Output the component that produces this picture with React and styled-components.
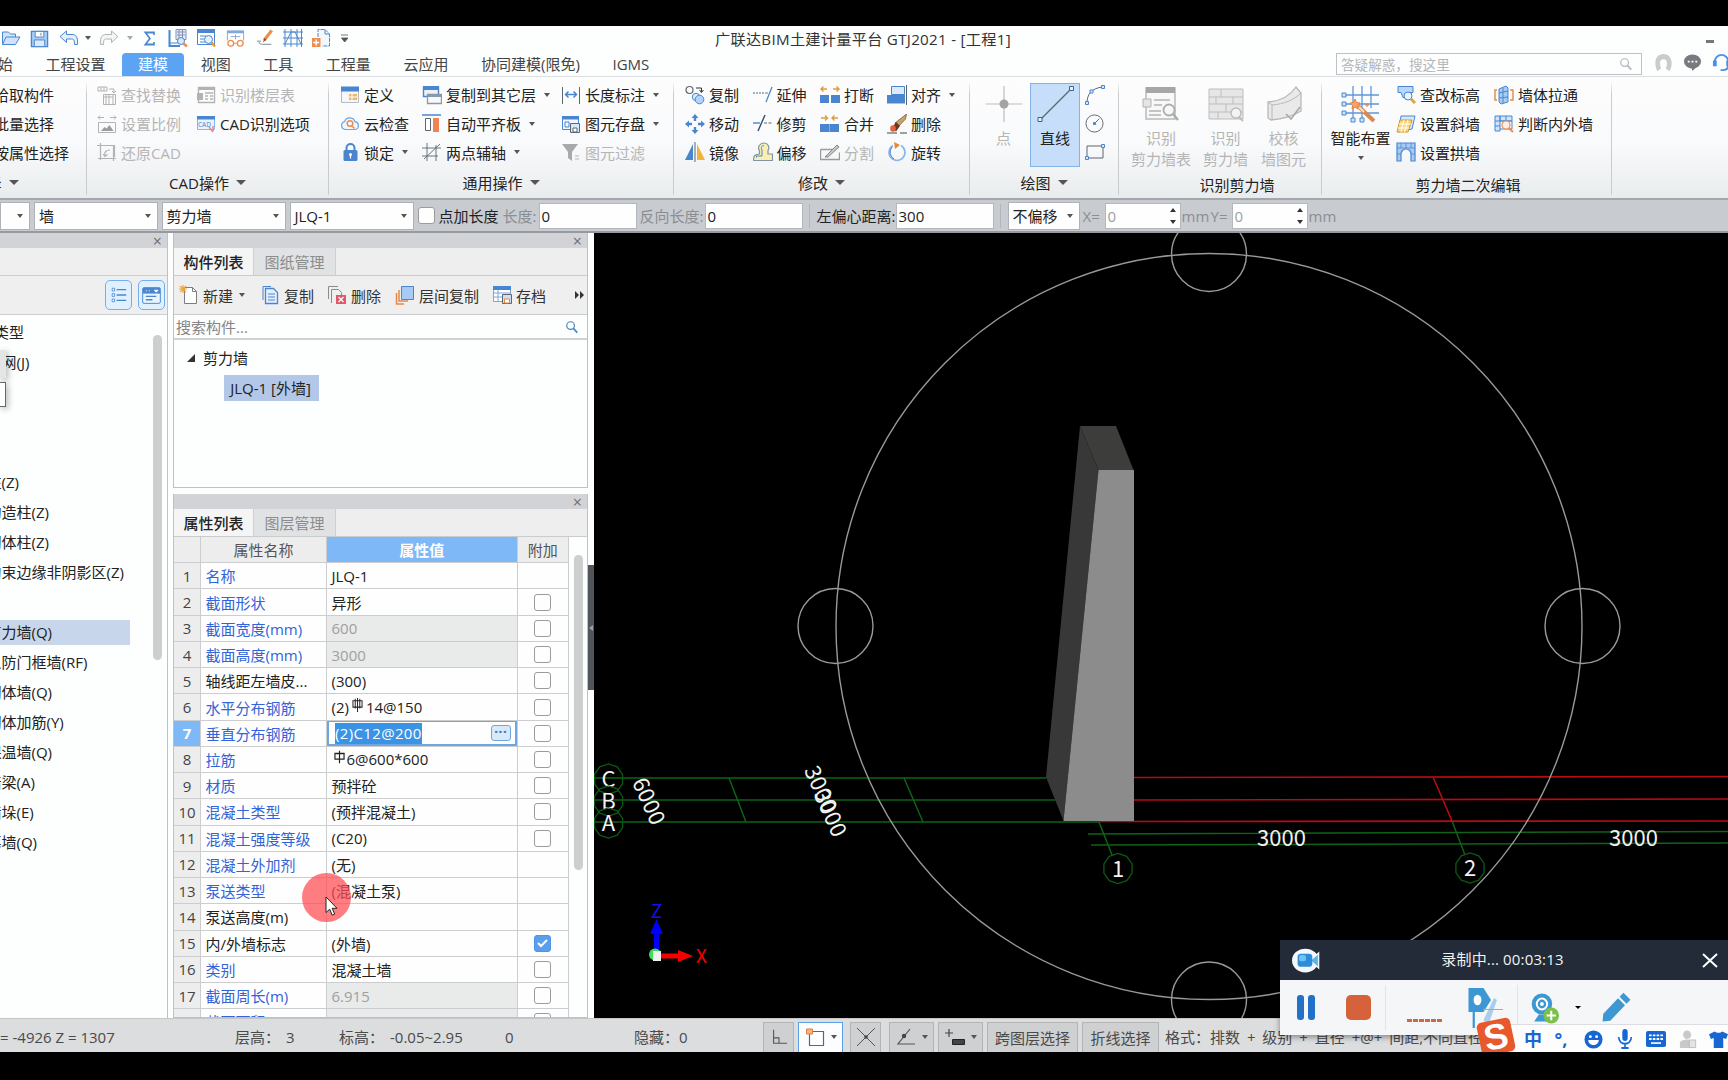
import { useState } from 'react'
import styled, { createGlobalStyle } from 'styled-components'

const GlobalStyle = createGlobalStyle`
    *{
        box-sizing: border-box;
    }
    body{
        margin: 0;
        background: #000;
        overflow: hidden;
        font-family: "Open Sans", "Noto Sans CJK SC", sans-serif;
        font-size: 15px;
        color: #222;
    }
`;

const B = '#4a86cf'
const O = '#ee8d4e'
const G = '#b3b3b3'
const D = '#5c6670'

/* ---------- icons, drawn on a 20x20 grid ---------- */
const icons = {
    folder: <><path d="M1.500 16V4h6l2 2h5v3" fill="#cfe3fa" stroke={B}/><path d="M1.500 16.500 5 9h14l-4.500 7.500z" fill="#cfe3fa" stroke={B}/></>,
    save: <><path d="M1.500 2.500h17v16h-17z" fill="#a9cdf5" stroke={B} strokeWidth="1.400"/><path d="M5.500 2.500h9v6h-9z" fill="#fff" stroke={B}/><path d="M4.500 11.500h11v7h-11z" fill="#dcebfc" stroke={B}/><path d="M11.500 4v3" stroke={B}/></>,
    undo: <path d="M1 8.500 7.500 3v3.500H13c4 0 6 2.500 5.500 10h-3c0-4-.5-5.500-3-5.500h-5V14.500z" fill="#e4effc" stroke={B}/>,
    redo: <path d="M19 8.500 12.500 3v3.500H7c-4 0-6 2.500-5.500 10h3c0-4 .5-5.500 3-5.500h5V14.500z" fill="#f4f4f4" stroke={G}/>,
    sigma: <path d="M16 6V3H4.500l6 7-6 7H16v-3" fill="none" stroke={B} strokeWidth="2.200"/>,
    calc: <><path d="M1.500 2v16H12" fill="none" stroke={B} strokeWidth="2"/><path d="M1 15h10" stroke={B}/><path d="M8 1.500h10v10H8z" fill="#e6eefa" stroke="#8191b5"/><path d="M9 4h8M9 7h8M11 2v9M14.500 2v9" stroke="#8191b5"/><circle cx="13" cy="13" r="3.500" fill="#dbe8f8" stroke={B}/><path d="m15.500 15.500 3.500 3" stroke={O} strokeWidth="2.500"/></>,
    report: <><path d="M1.500 1.500h17v15h-17z" fill="#fff" stroke={B}/><path d="M1 1h18v4H1z" fill={B}/><path d="M4 8h6M4 11h4M4 14h5" stroke={B}/><circle cx="12.500" cy="11.500" r="4" fill="#e6f0fc" stroke={B}/><path d="m15.500 14.500 3.500 4" stroke="#e29a3a" strokeWidth="2.500"/></>,
    glasses: <><path d="M1.500 12V2.500h17V12" fill="#fff" stroke="#8aa9d6"/><path d="M1 1.500h18v3H1z" fill="#7fa9dd"/><path d="M5 8h10M10 6v5" stroke="#8aa9d6"/><circle cx="5" cy="15" r="3" fill="none" stroke={O} strokeWidth="1.400"/><circle cx="15" cy="15" r="3" fill="none" stroke={O} strokeWidth="1.400"/><path d="M8 15h4" stroke={O}/></>,
    brush: <><path d="M17.500 1.500 9 12.500" stroke={O} strokeWidth="3.500"/><path d="m9.500 10-2 5 4-3z" fill="#8a4a22"/><path d="M1 13.500h4c-3 2-1 3.500 3 3.500h9" fill="none" stroke="#77828f"/></>,
    mesh: <path d="M2 1v18M8 1v18M14 1v18M18.500 1v18M0 4h20M0 10h20M0 16h20M2 16 8 4h4l6 12" fill="none" stroke={B}/>,
    addpage: <><path d="M7 9V1.500h7l4.500 4.500v12H11" fill="#f3f8fe" stroke={B} strokeDasharray="4 1"/><path d="M14 1.500V6h4.500" fill="none" stroke={B}/><path d="M1 10h8.500v9H1z" fill={O}/><path d="M5.200 11.500v6M2.200 14.500h6" stroke="#fff" strokeWidth="1.400"/></>,
    find: <><path d="M1 2h9v4H1zM4 2v4M7 2v4" fill="none" stroke={G}/><path d="M12 4h5v3M15 6l2 2 2-2" fill="none" stroke={G}/><path d="M6.500 9.500h12v10h-12zM6 12h10M9 9v10M12 9v10M16 9v10" fill="none" stroke={G}/></>,
    scale: <><path d="M1 3.500h6M3 1.500l-2 2 2 2M13 3.500h6M17 1.500l2 2-2 2" fill="none" stroke={G}/><path d="M1.500 8.500h17v10h-17z" fill="none" stroke={G}/><path d="m4 17 3.500-4 2 1.500 3-3.500 4 6z" fill="#9c9c9c"/></>,
    restore: <path d="M3.500 1v17M0 3.500h17.500V15M1 16.500h18M16.500 3v16M8 14c-1-4 1-6 5-6M6 12l2 2.500 2.500-2" fill="none" stroke={G} strokeWidth="1.200"/>,
    floors: <><path d="M2.500 2.500h16v15h-16z" fill="none" stroke={G} strokeWidth="1.400"/><path d="M2 2h17v3H2zM1 8h6v7H1z" fill={G}/><path d="M9 8h8M9 11h3M9 14h3M14 11h3M14 14h3" stroke={G} strokeWidth="1.400"/></>,
    cadopt: <><path d="M1.500 3.500h17v12h-17z" fill="#e9f2fd" stroke="#8ab5ea"/><path d="M1 2h18v3.500H1z" fill={B}/><text x="2" y="13" fontSize="6.500" fill={B}>CAD</text><path d="m13 13 4 5M17 12v5" stroke="#e58a8a" strokeWidth="1.500"/></>,
    define: <><path d="M1.500 2.500h17v15h-17z" fill="#f4f6f9" stroke="#b3bccb"/><path d="M1 1.500h18v5H1z" fill={B}/><path d="M9 9h8v6H9z" fill="#f3b563"/><path d="M3 11h4M3 14h4M9 12h8M12 9v6" stroke="#fff"/></>,
    cloud: <><path d="M5 15.500a4 4 0 0 1-.5-7.800 5.500 5.500 0 0 1 10.500 0 4 4 0 0 1 .5 7.800z" fill="#f0f7ff" stroke="#6ea5e4" strokeWidth="1.200"/><circle cx="10" cy="9.500" r="2.800" fill="none" stroke={O} strokeWidth="1.500"/><path d="m12 12 2.500 2.500" stroke={O} strokeWidth="1.500"/></>,
    lock: <><path d="M6.500 9V6a4 4 0 0 1 8 0v3" fill="none" stroke={B} strokeWidth="2"/><rect x="3.500" y="8" width="14" height="11" rx="1.500" fill={B}/><circle cx="10.500" cy="12.500" r="1.500" fill="#fff"/><path d="M10.500 13v3.500" stroke="#fff" strokeWidth="1.200"/></>,
    copyfloor: <><path d="M1.500 2.500h15v9h-15z" fill="#eaf2fc" stroke={B} strokeWidth="1.400"/><path d="M1 1h16v4H1z" fill={B}/><path d="M5.500 9.500h14v9h-14z" fill="#f7f8f9" stroke="#8b98a5" strokeWidth="1.300"/><path d="M5 9h15v3H5z" fill="#8b98a5"/></>,
    slab: <><path d="M0 1h19" stroke={B} strokeWidth="1.500"/><path d="M3.500 4.500h5v12h-5z" fill="#fff" stroke={D}/><path d="M11 4h6v14h-6z" fill="#ef8355"/></>,
    axis: <path d="M0 6h19M0 14h16M5 1v18M14 3v16M2 17 18 2" fill="none" stroke={D} strokeWidth=".9"/>,
    dim: <><path d="M1.500 2v17M18.500 2v17" stroke={D}/><path d="M5 9.500h10M7.500 6.500l-3 3 3 3M12.500 6.500l3 3-3 3" fill="none" stroke={B} strokeWidth="1.500"/></>,
    saveimg: <><path d="M1.500 2.500h16v13h-16z" fill="#f3f8fe" stroke={B}/><path d="M1 2h17v3.500H1z" fill={B}/><path d="M4 8h4v5H4z" fill="none" stroke={B}/><path d="M9.500 9.500h9v9h-9z" fill="#d8e8fb" stroke={D}/><path d="M12 14h4v4h-4z" fill="#fff" stroke={D}/></>,
    filter: <><path d="M1 2h16l-6 8v9l-4-3v-6z" fill="#a9a9a9"/><path d="M14 14h4M14 17h4" stroke={G}/></>,
    copy: <><circle cx="4.500" cy="5" r="3.500" fill="none" stroke={D} strokeWidth="1.200"/><path d="M11 3h5.500v4M14.500 5l2 2.500 2-2.500" fill="none" stroke="#333"/><circle cx="11" cy="12" r="3.700" fill="#dbeafc" stroke={B}/><circle cx="14.500" cy="14.500" r="4.300" fill="#b5d5f8" stroke={B}/></>,
    move: <path d="M10 0l3.500 4h-2.300v3H8.800V4H6.500zM10 20l3.500-4h-2.300v-3H8.800v3H6.500zM0 10l4-3.500v2.300h3v2.400H4v2.300zM20 10l-4-3.500v2.300h-3v2.400h3v2.300z" fill={B}/>,
    mirror: <><path d="M8 2v16H0z" fill={B}/><path d="M12 2v16h8z" fill="#f1b33c"/><path d="M10 0v20" stroke={D}/></>,
    extend: <><path d="M0 8h11" stroke={D} strokeDasharray="2 1"/><path d="M12 8h3" stroke={B}/><path d="M19 2 13 17" stroke={B} strokeWidth="1.300"/></>,
    trim: <><path d="M0 9h7" stroke={B} strokeWidth="1.400"/><path d="M11 9h9" stroke={D} strokeDasharray="3 1.500"/><path d="M12 1 5 17" stroke="#2d4d73" strokeWidth="1.400"/></>,
    offset: <><path d="M.7 18.500c-.5-4 1-6.500 5.800-6.500V9C4 5 7 1 11 1s6 4 4 7.500V12h4.500v6.500z" fill="#f7efb4" stroke="#84919e" strokeWidth="1.200"/><path d="M3.500 15.500V14H9V8C7.500 5.500 9 3.500 11 3.500" fill="none" stroke={B}/></>,
    breaks: <><path d="M0 10h9v8H0zM11 10h9v8h-9z" fill={B}/><path d="M1 4h6M3.500 1.500 1 4l2.500 2.500M13 4h6M16.500 1.500 19 4l-2.500 2.500" fill="none" stroke="#e29a3a" strokeWidth="1.400"/></>,
    merge: <><path d="M0 10h19v8H0z" fill={B}/><path d="M9.500 10v8" stroke="#7eaee8"/><path d="M1 4h6M5 1.500 7.500 4 5 6.500M12 4h6M14.500 1.500 12 4l2.500 2.500" fill="none" stroke="#e29a3a" strokeWidth="1.400"/></>,
    split: <><path d="M.5 7.500h13M.5 7.500v10h19v-7" fill="none" stroke="#9b9b9b" strokeWidth="1.400"/><path d="m5 15 12-12 2 2L8 15z" fill="#c9c9c9" stroke="#858585"/></>,
    align: <><path d="M4.500 1.500h13v8h-13z" fill="#dceafb" stroke={B}/><path d="M0 10h18v8.500H0z" fill={B}/><path d="M19.500 0v20" stroke={D}/></>,
    erase: <><path d="m19.500 0-1 5L11 13 8 9z" fill="#c7a56a" stroke="#7d5f33" strokeWidth=".8"/><path d="m9 8-4 6 4 3.500 4-5.500z" fill="#6b3524"/><ellipse cx="6" cy="14.500" rx="2.800" ry="3.200" fill="#e0603f"/><path d="M0 19h10M13 19h7" stroke="#444" strokeWidth="1.200"/></>,
    rotate: <><path d="M14 3.500a8 8 0 1 1-8 0" fill="none" stroke="#8ab5ea" strokeWidth="1.600"/><path d="M5 5a8 8 0 0 0 2 12" fill="none" stroke={B}/><path d="m7 0 6 3-5 4z" fill="#e08a3b"/></>,
    point: <><path d="M20 2v36M2 20h36" stroke="#bdbdbd" strokeWidth="1.200"/><circle cx="20" cy="20" r="4.500" fill="#a3a3a3"/></>,
    line: <><path d="M6 35 36 5" stroke={D} strokeWidth="1.200"/><path d="M3 33.500h4v4H3zM34.500 2.500h4v4h-4z" fill="#eaf4ff" stroke="#39638f"/></>,
    arc: <><path d="M2 18C2 10 6 3 18 2" fill="none" stroke={D}/><path d="M.5 16.500h3v3h-3zM5 5h3v3H5zM16.500.5h3v3h-3z" fill="#d7e9fc" stroke={B}/></>,
    circle: <><circle cx="10" cy="10" r="9" fill="none" stroke={D}/><path d="m10 10 5-5" stroke={D}/><path d="M8.500 8.500h3v3h-3z" fill={B}/></>,
    rect: <><path d="M2 4h16v12H2z" fill="none" stroke={D}/><path d="M.5 14.500h3v3h-3zM16.500 2.500h3v3h-3z" fill="#d7e9fc" stroke={B}/></>,
    idtable: <><path d="M5 4h29v31H5z" fill="#f8f8f8" stroke="#b9b9b9" strokeWidth="1.500"/><path d="M5 3h29v6H5z" fill="#a6a6a6"/><path d="M2 15h8v8H2z" fill="#e5e5e5" stroke="#b3b3b3"/><path d="M13 16h16M13 21h8M8 27h12M8 31h12" stroke="#b3b3b3" strokeWidth="1.500"/><circle cx="28" cy="26" r="5.500" fill="#f8f8f8" stroke="#adadad" strokeWidth="1.800"/><path d="m32 30 5 6" stroke="#adadad" strokeWidth="2.500"/></>,
    idwall: <><path d="M3 5h34v30H3z" fill="#e6e6e6" stroke="#bdbdbd"/><path d="M3 13h34M3 20h34M3 28h34M15 5v8M27 13v7M10 13v7M20 20v8M12 28v7" stroke="#bdbdbd"/><circle cx="30" cy="29" r="5" fill="#f4f4f4" stroke="#bdbdbd" strokeWidth="1.500"/><path d="m33 33 4 4" stroke="#bdbdbd" strokeWidth="2"/></>,
    check3d: <><path d="M4 18c12-1 22-6 28-15l5 6v18c-8 5-18 8-30 9l-3-2z" fill="#e9e9e9" stroke="#b8b8b8" strokeWidth="1.300"/><path d="M4 18l4 3c12-1 22-5 29-12M8 21v15" fill="none" stroke="#b8b8b8"/><path d="m22 30 5 5 9-12" fill="none" stroke="#a8a8a8" strokeWidth="1.500"/></>,
    smart: <><path d="M12 2v33M21 2v33M30 2v22M4 11h34M4 20h34M4 29h34" stroke="#5f97da" strokeWidth="1.300"/><path d="M1 9h4v4H1zM1 18h4v4H1zM1 27h4v4H1zM10 34h4v4h-4zM19 34h4v4h-4z" fill="#cfe3fa" stroke={B}/><path d="m17 22 16 15" stroke="#d9894f" strokeWidth="4"/><path d="m18 23 5 5" stroke="#fbe3d2" strokeWidth="2"/><path d="m14 15 1.500 3.500L19 19l-2.500 2.500L17 25l-3-2-3 2 .5-3.500L9 19l3.500-.5zM26 23v-4M24 21h4" fill="#f3a56d" stroke="#e8803b"/></>,
    elev: <><path d="M2 1.500h15v6h-3v5H7l-2-5H2z" fill="#b9d7f8" stroke={B}/><circle cx="12" cy="11" r="4" fill="#eaf3fd" stroke={B}/><path d="m15 14 4 4" stroke="#e0a33c" strokeWidth="3"/></>,
    slope: <><path d="M5 2h14l-3 13-14 3z" fill="#d8e8fb" stroke={B}/><path d="M4 6h12l-4 12H1z" fill="#f7d77a" stroke="#d29a2e"/><path d="M3 10h12M2 14h11M8 6l-3 12M12 6 8.500 18" stroke="#fff"/></>,
    arch: <><path d="M1 1h18v18h-4v-7a5 5 0 0 0-10 0v7H1z" fill="#a8cbf4" stroke={B} strokeWidth="1.200"/><path d="M5 1v5M10 1v5M15 1v5M1 6h18M1 12h4M15 12h4" stroke={B} strokeWidth=".8"/></>,
    through: <><path d="M5 4 12 1l2 2v14l-7 2-2-2z" fill="#a8cbf4" stroke={B}/><path d="M9 3v15M5 8l9-2M5 13l9-1" stroke={B}/><path d="M3 5H1v10h2M16 5h3v10h-3" fill="none" stroke="#e08a3b" strokeWidth="1.400"/></>,
    inout: <><path d="M1 2h5v15H1zM6 2h12v5H6z" fill="#cfe3fa" stroke={B}/><path d="M1 7h17v8H6M12 2v5M1 12h5" fill="none" stroke={B}/><circle cx="12" cy="11" r="4" fill="#fdeee6" stroke={O} strokeWidth="1.200"/><path d="m15 14 4 4" stroke={O} strokeWidth="2"/></>,
    newfile: <><path d="M5.500 2.500h8l4 4v12h-12z" fill="#fff" stroke="#7d7d7d"/><path d="M13.500 2.500v4h4" fill="none" stroke="#7d7d7d"/><path d="M4 0v8M0 4h8M1 1l6 6M7 1 1 7" stroke="#f0a63c" strokeWidth="1.200"/></>,
    dup: <><path d="M3 15V1.500h8" fill="none" stroke={B}/><path d="M5.500 3.500h8l4 4v11h-12z" fill="#e4f0fd" stroke={B} strokeWidth="1.300"/><path d="M8 9h7M8 12h7M8 15h7" stroke={B}/></>,
    del: <><path d="M1.500 14V1.500H11" fill="none" stroke="#8b8b8b"/><path d="M4.500 18V4.500h7l3 3V10" fill="none" stroke="#8b8b8b"/><path d="M9 10h10v9H9z" fill="#e0596a"/><path d="m11.500 12 5 5M16.500 12l-5 5" stroke="#fff" strokeWidth="1.300"/></>,
    layer: <><path d="M1.500 8v11H9M4 5v11h9" fill="none" stroke="#e58a4a" strokeWidth="1.500"/><path d="M6.500 1.500h12v13h-12z" fill="#a8cbf6" stroke={B}/></>,
    archive: <><path d="M1.500 2.500h17v14h-17z" fill="#fff" stroke="#7ba7dc"/><path d="M1 1h18v4H1z" fill={B}/><path d="M2 8h16M2 12h8M6 5v11" stroke="#7ba7dc"/><path d="M10.500 9.500h9v9h-9z" fill="#cfe0f6" stroke={D}/><path d="M12.500 14h5v4h-5z" fill="#fff" stroke="#e08a3b"/></>,
    list: <><path d="M1.500 2.500h3v3h-3zM1.500 8.500h3v3h-3zM1.500 14.500h3v3h-3z" fill="#fff" stroke={B}/><path d="M7 4h12M7 10h12M7 16h12" stroke={B} strokeWidth="1.400"/></>,
    card: <><rect x=".7" y="1.700" width="18.600" height="16.600" rx="1.500" fill="#e8f4ff" stroke={B}/><path d="M1 2h18v6H1z" fill={B}/><path d="M4 5h1M7 5h1M13 4.500h4l-2 2z" stroke="#fff" fill="#fff"/><path d="M4 11h11M4 14.500h7" stroke={B} strokeWidth="1.400"/></>,
    search: <><circle cx="8" cy="8" r="5.500" fill="none" stroke="currentColor" strokeWidth="1.700"/><path d="m12 12 5.500 6" stroke="currentColor" strokeWidth="2.400"/></>,
    user: <><path d="M3.500 19C-1 10 2 1 10 1s11 9 6.500 18l-4-2.500c2-6 1.500-10-2.500-10s-4.500 4-2.500 10z" fill="#c9cbcd"/></>,
    chat: <><ellipse cx="10" cy="9" rx="9" ry="7.500" fill="#777b80"/><path d="m9 15 1 4 4-4z" fill="#777b80"/><path d="M5 9h2M9 9h2M13 9h2" stroke="#fff" strokeWidth="1.800"/></>,
    headset: <><path d="M3 11V9a7 7 0 0 1 14 0v4c0 3-2 5-5 5H9" fill="none" stroke="#4a90e8" strokeWidth="2"/><path d="M1 8h4v6H1zM15 8h4v6h-4z" fill="#4a90e8"/></>,
    ortho: <path d="M4 2v15h15M4 11h6v6" fill="none" stroke="#555" strokeWidth="1.200"/>,
    snapbox: <><path d="M4.500 4.500h14v14h-14z" fill="#fff" stroke="#3a6ea8" strokeWidth="1.200"/><path d="M1.500 2h6v5h-6z" fill="#f4b483" stroke="#e0803c"/></>,
    cross: <><path d="M1 1 19 19M19 1 1 19" stroke="#555"/><circle cx="10" cy="10" r="1.800" fill="#444"/></>,
    angle: <><path d="M14 2 2 17h17" fill="none" stroke="#555" strokeWidth="1.200"/><circle cx="8" cy="9" r="2.200" fill="#444"/></>,
    plusbar: <><path d="M4 2v8M0 6h8" stroke="#444" strokeWidth="1.200"/><path d="M7.500 12.500h12v5h-12z" fill="#444" stroke="#222"/></>,
    rebar: <path d="M10 0v20M3 4h14v9H3zM6.500 1v14M13.500 1v14" fill="none" stroke="#222" strokeWidth="1.500"/>,
    rebarP: <path d="M10 1v18M3 5h14v8H3z" fill="none" stroke="#222" strokeWidth="1.800"/>,
    pin: <><path d="m11 16 7-11 2 1-6 13z" fill="#a9cdea"/><path d="M1 0h10l5 6-5 6H1z" fill="#3d97d3"/><circle cx="7" cy="6" r="2.600" fill="#fff"/><path d="M4.500 12v8" stroke="#3d97d3" strokeWidth="1.500"/></>,
    webcam: <><circle cx="9" cy="7.500" r="5.300" fill="#fff" stroke="#3d97d3" strokeWidth="2.600"/><circle cx="9" cy="7.500" r="2" fill="none" stroke="#3d97d3" strokeWidth="1.500"/><path d="M4 18.500h10L11 14H7z" fill="#3d97d3"/><circle cx="15" cy="14.700" r="5" fill="#7cc04b"/><path d="M15 11.700v6M12 14.700h6" stroke="#fff" strokeWidth="1.300"/></>,
    pencil: <><path d="m1 19 .5-5L11 4l4.500 4.500-9.500 10z" fill="#3d97d3"/><path d="m12 3 2.500-2.500L19 5l-2.500 2.500z" fill="#3d97d3"/></>,
    cam: <><circle cx="9.500" cy="10" r="9.500" fill="#f5f8fc"/><path d="m13 10 6-6v12z" fill="#5db4e8" stroke="#f5f8fc"/><rect x="4" y="4.500" width="10.500" height="10.500" rx="2.500" fill="#2e8dd8"/><rect x="5" y="5.500" width="5" height="5" rx="1.500" fill="#6cc2f2"/></>,
    face: <><circle cx="10" cy="10" r="9.500" fill="#1667d1"/><circle cx="6.700" cy="7" r="1.500" fill="#fff"/><circle cx="13.300" cy="7" r="1.500" fill="#fff"/><path d="M4.500 10.500h11c0 7-11 7-11 0z" fill="#fff"/></>,
    mic: <><rect x="7" y="0" width="6" height="12" rx="3" fill="#1667d1"/><path d="M3 8c0 9 14 9 14 0M10 15v4M6 19h8" fill="none" stroke="#1667d1" strokeWidth="1.800"/></>,
    keyboard: <><rect x="0" y="1" width="20" height="18" rx="2" fill="#1667d1"/><path d="M3 6h14M3 10h14" stroke="#fff" strokeWidth="2" strokeDasharray="2.600 1.200"/><path d="M5 14.500h10" stroke="#fff" strokeWidth="1.800"/></>,
    person: <><circle cx="9" cy="5" r="4.500" fill="#c9c9c9"/><path d="M1 19v-6c3-4 13-4 14 0v6z" fill="#c9c9c9"/><path d="M11.500 10.500h7v8h-7z" fill="#e4e4e4" stroke="#bbb"/></>,
    shirt: <path d="M6 1.500c2 2 6 2 8 0l6 3-2 5-3-1V19H5V8.500l-3 1-2-5z" fill="#1667d1"/>,
}

function Icon({ name, size = 20, box = 20, w }){
    return (
        <svg width={w || size} height={size} viewBox={`0 0 ${box} ${box}`} fill="none" preserveAspectRatio="none">
            {icons[name]}
        </svg>
    )
}

const Window = styled.div`
    position: relative;
    width: 1728px;
    height: 1080px;
    padding: 26px 0 28px;
    display: flex;
    flex-direction: column;
    overflow: hidden;
    white-space: nowrap;
    background: #000;
    svg{
        flex: none;
    }
`;

const Arrow = styled.i`
    flex: none;
    border: ${props => props.$s || 3.5}px solid transparent;
    border-top: ${props => (props.$s || 3.5) + 0.5}px solid ${props => props.$c || '#555'};
    border-bottom: 0;
`;

/* ---------- title bar and tabs ---------- */
const TitleBar = styled.div`
    flex: none;
    height: 27px;
    display: flex;
    align-items: center;
    padding: 0 14px 3px 1px;
    background: #fdfefe;
`;

const QuickIcon = styled.div`
    display: flex;
    align-items: center;
    justify-content: space-between;
    width: ${props => props.$w}px;
    padding-right: ${props => props.$pad || 9}px;
`;

const Title = styled.div`
    margin-left: 365px;
    flex: 1;
    font-size: 15.2px;
    letter-spacing: 0.27px;
    color: #333;
`;

const Minimise = styled.div`
    width: 8px;
    height: 3px;
    margin-top: 6px;
    background: #777;
`;

const TabRow = styled.div`
    flex: none;
    height: 24px;
    display: flex;
    background: #fdfefe;
    border-bottom: 1px solid #dcdfe1;
`;

const Tab = styled.div`
    height: 23px;
    line-height: 23px;
    padding: 0 16.3px;
    color: ${props => props.$on ? '#fff' : '#444'};
    background: ${props => props.$on ? '#5ba3f3' : 'none'};
    border-radius: 4px 4px 0 0;
    cursor: pointer;
    &:first-child{
        margin-left: -33.5px;
    }
`;

const Ask = styled.div`
    display: flex;
    align-items: center;
    justify-content: space-between;
    width: 306px;
    height: 22px;
    margin-left: auto;
    padding: 0 8px 0 4px;
    border: 1px solid #bfc2c5;
    color: #b4b6b8;
    font-size: 13.6px;
`;

const Account = styled.div`
    display: flex;
    gap: 10px;
    width: 86px;
    padding-left: 12px;
    overflow: hidden;
`;

/* ---------- ribbon ---------- */
const Ribbon = styled.div`
    flex: none;
    display: flex;
    height: 121px;
    background: linear-gradient(#fdfdfe 0%, #f9fafb 55%, #e9ecee 100%);
`;

const Group = styled.div`
    flex: none;
    width: ${props => props.$w}px;
    height: 121px;
    padding-top: 3.5px;
    display: flex;
    flex-direction: column;
    overflow: hidden;
    border-right: 1px solid;
    border-image: linear-gradient(transparent 4%, #c9cccf 15%, #c9cccf 96%, transparent 97%) 1;
`;

const GroupBody = styled.div`
    height: 87px;
    display: flex;
    margin-left: ${props => props.$pl}px;
`;

const GroupName = styled.div`
    height: 29px;
    padding-top: ${props => props.$low ? 4 : 0}px;
    display: flex;
    align-items: center;
    justify-content: center;
    gap: 7px;
    margin-left: ${props => props.$shift || 0}px;
`;

const Column = styled.div`
    flex: none;
    width: ${props => props.$w}px;
    padding-left: ${props => props.$pl || 0}px;
`;

const Tool = styled.div`
    height: 28.7px;
    display: flex;
    align-items: center;
    gap: 4px;
    color: ${props => props.$off ? '#b5b5b5' : '#222'};
    i{
        margin-left: 4px;
    }
`;

const BigTool = styled.div`
    flex: none;
    width: ${props => props.$w}px;
    height: 84px;
    margin-top: 2.5px;
    display: flex;
    flex-direction: column;
    align-items: center;
    text-align: center;
    line-height: 21px;
    color: ${props => props.$off ? '#b5b5b5' : '#222'};
    background: ${props => props.$on ? '#c6defa' : 'none'};
    border: 1px solid ${props => props.$on ? '#86b3e6' : 'transparent'};
    svg{
        margin-bottom: 4px;
    }
    i{
        margin-top: 7px;
    }
`;

const ribbon = [
    { w: 87, pl: -26, name: '选择', shift: -96, arrow: true, cols: [
        { w: 110, tools: [[null, '拾取构件'], [null, '批量选择'], [null, '按属性选择']] },
    ] },
    { w: 242, pl: 10, name: 'CAD操作', arrow: true, cols: [
        { w: 99, tools: [['find', '查找替换', 1], ['scale', '设置比例', 1], ['restore', '还原CAD', 1]] },
        { w: 120, tools: [['floors', '识别楼层表', 1], ['cadopt', 'CAD识别选项']] },
    ] },
    { w: 345, pl: 11, name: '通用操作', arrow: true, cols: [
        { w: 82, tools: [['define', '定义'], ['cloud', '云检查'], ['lock', '锁定', 0, 1]] },
        { w: 139, tools: [['copyfloor', '复制到其它层', 0, 1], ['slab', '自动平齐板', 0, 1], ['axis', '两点辅轴', 0, 1]] },
        { w: 110, tools: [['dim', '长度标注', 0, 1], ['saveimg', '图元存盘', 0, 1], ['filter', '图元过滤', 1]] },
    ] },
    { w: 296, pl: 11, name: '修改', arrow: true, cols: [
        { w: 67.500, tools: [['copy', '复制'], ['move', '移动'], ['mirror', '镜像']] },
        { w: 67.500, tools: [['extend', '延伸'], ['trim', '修剪'], ['offset', '偏移']] },
        { w: 67, tools: [['breaks', '打断'], ['merge', '合并'], ['split', '分割', 1]] },
        { w: 80, tools: [['align', '对齐', 0, 1], ['erase', '删除'], ['rotate', '旋转']] },
    ] },
]

function ToolColumn({ col }){
    return (
        <Column $w={col.w}>
            {col.tools.map(([icon, text, off, arrow]) => (
                <Tool key={text} $off={off}>
                    {icon ? <Icon name={icon} /> : <Icon name="none" w={16} />}
                    {text}
                    {arrow ? <Arrow /> : null}
                </Tool>
            ))}
        </Column>
    )
}

/* ---------- option bar ---------- */
const Options = styled.div`
    flex: none;
    height: 35px;
    display: flex;
    align-items: center;
    background: #c8cbd0;
    border-top: 2px solid #a4a7aa;
    border-bottom: 2px solid #97999c;
    color: #222;
`;

const Combo = styled.div`
    flex: none;
    width: ${props => props.$w}px;
    height: 28px;
    margin: 0 2px 0 ${props => props.$flush ? 0 : 2}px;
    padding: 0 6px 0 4px;
    display: flex;
    align-items: center;
    justify-content: space-between;
    background: #fefefe;
    border: 1px solid #aeb1b5;
`;

const Input = styled.div`
    flex: none;
    width: ${props => props.$w}px;
    height: 26px;
    padding: 0 4px 0 2px;
    display: flex;
    align-items: center;
    justify-content: space-between;
    background: #fefefe;
    border: 1px solid #b4b7bb;
    color: ${props => props.$off ? '#a0a0a0' : '#222'};
`;

const OptionText = styled.div`
    flex: none;
    width: ${props => props.$w}px;
    padding-left: ${props => props.$pl || 0}px;
    color: ${props => props.$off ? '#8b8e92' : '#222'};
`;

const Divider = styled.div`
    width: 1px;
    height: 24px;
    margin: 0 ${props => props.$m || 6.5}px;
    background: #b2b5b9;
`;

const Spin = styled.div`
    display: flex;
    flex-direction: column;
    gap: 8px;
    i:first-child{
        transform: rotate(180deg);
    }
`;

const Check = styled.div`
    flex: none;
    width: 17px;
    height: 17px;
    border: 1.5px solid ${props => props.$on ? '#4d95e6' : '#9b9b9b'};
    border-radius: 3px;
    background: ${props => props.$on ? '#5a9fee' : '#fefefe'};
    svg{
        display: block;
    }
`;

/* ---------- left and middle panels ---------- */
const Main = styled.div`
    flex: none;
    height: 785px;
    display: flex;
    background: #fdfefe;
`;

const Nav = styled.div`
    flex: none;
    width: 168px;
    margin-right: 5px;
    border-right: 1px solid #bfc1c4;
    overflow: hidden;
`;

const PanelTop = styled.div`
    height: 15px;
    padding-right: 5px;
    text-align: right;
    font-size: 16px;
    line-height: 16px;
    color: #6d6f72;
    background: #d2d3d7;
`;

const NavHead = styled.div`
    height: 28px;
    background: #efeff0;
    border-bottom: 1px solid #cdced0;
`;

const NavTools = styled.div`
    height: 39px;
    display: flex;
    justify-content: flex-end;
    gap: 6px;
    padding: 4px 2px 0 0;
    background: #efeff0;
    border-bottom: 1px solid #cdced0;
`;

const ModeButton = styled.div`
    width: 27px;
    height: 30px;
    display: flex;
    align-items: center;
    justify-content: center;
    background: #dff0ff;
    border: 1px solid #74aeee;
    border-radius: 5px;
`;

const NavBody = styled.div`
    display: flex;
    height: 703px;
`;

const NavList = styled.div`
    flex: 1;
    padding-top: 2px;
    overflow: hidden;
`;

const NavItem = styled.div`
    height: 30.05px;
    display: flex;
    align-items: center;
    span{
        width: 130px;
        height: 25px;
        line-height: 25px;
        text-indent: ${props => props.$head ? -36 : -13.5}px;
        background: ${props => props.$on ? '#c8d6ec' : 'none'};
    }
`;

const Scroll = styled.div`
    flex: none;
    width: 9px;
    height: ${props => props.$h}px;
    margin: ${props => props.$m};
    border-radius: 5px;
    background: #cdcfcf;
`;

const Side = styled.div`
    flex: none;
    width: 415px;
    display: flex;
    flex-direction: column;
    gap: 6px;
    overflow: hidden;
`;

const Panel = styled.div`
    flex: none;
    height: ${props => props.$h}px;
    border: 1px solid #bfc1c4;
    border-top: 0;
    overflow: hidden;
`;

const PanelTabs = styled.div`
    height: 28px;
    display: flex;
    background: #eeeeef;
    border-bottom: 1px solid #c9cbcd;
`;

const PanelTab = styled.div`
    width: ${props => props.$on ? 80 : 82}px;
    line-height: 28px;
    height: 27px;
    text-align: center;
    color: ${props => props.$on ? '#222' : '#8c8c8c'};
    font-weight: ${props => props.$on ? 500 : 400};
    background: ${props => props.$on ? '#f5f5f6' : '#e1e2e3'};
    border-right: 1px solid #cfd0d2;
`;

const PanelTools = styled.div`
    height: 39px;
    display: flex;
    align-items: center;
    padding-left: 5px;
    color: #333;
    background: #efeff0;
    border-bottom: 1px solid #c9cbcd;
`;

const PanelTool = styled.div`
    width: ${props => props.$w}px;
    display: flex;
    align-items: center;
    gap: 4px;
    i{
        margin-left: 2px;
    }
`;

const SearchRow = styled.div`
    height: 25px;
    display: flex;
    align-items: center;
    justify-content: space-between;
    padding: 0 8px 0 2px;
    color: #858585;
    border-bottom: 2px solid #cfd1d3;
    svg{
        color: #4a86b8;
    }
`;

const TreeRoot = styled.div`
    display: flex;
    align-items: center;
    gap: 8px;
    height: 25px;
    margin: 5px 0 0 13px;
    &::before{
        content: "";
        border-left: 8px solid transparent;
        border-bottom: 8px solid #333;
    }
`;

const TreeLeaf = styled.div`
    width: 95px;
    height: 26px;
    margin: 4.500px 0 0 50px;
    padding-right: 2px;
    line-height: 26px;
    text-align: center;
    background: #b3c8e8;
`;

const TableWrap = styled.div`
    display: flex;
`;

const Table = styled.div`
    width: 395px;
`;

const Row = styled.div`
    height: 26.24px;
    display: grid;
    grid-template-columns: 27px 126px 190.500px 51.500px;
`;

const Cell = styled.div`
    display: flex;
    align-items: center;
    justify-content: ${props => props.$mid ? 'center' : 'flex-start'};
    padding-left: ${props => props.$mid ? 0 : 4.5}px;
    border-right: 1px solid #cbcdcf;
    border-bottom: 1px solid #cbcdcf;
    overflow: hidden;
    color: ${props => props.$c || '#222'};
    background: ${props => props.$bg || '#fefefe'};
    font-weight: ${props => props.$bold ? 700 : 400};
`;

const Glyph = styled.span`
    height: 22px;
    margin: 0 ${props => props.$m}px;
`;

const Editor = styled.div`
    flex: 1;
    height: 26px;
    margin-left: -4.5px;
    padding: 0 4px 0 6px;
    display: flex;
    align-items: center;
    justify-content: space-between;
    border: 2px solid #6da6e2;
    span{
        line-height: 21px;
        letter-spacing: 0.35px;
        color: #fff;
        background: #3a93e4;
    }
    b{
        width: 20px;
        height: 16px;
        line-height: 11px;
        text-align: center;
        color: #3f7fc9;
        background: #d9e9fa;
        border: 1px solid #6da6e2;
        border-radius: 3px;
    }
`;

const rows = [
    ['名称', 'JLQ-1', 'b', '', 0],
    ['截面形状', '异形', 'b', 'box', 0],
    ['截面宽度(mm)', '600', 'b', 'box', 1],
    ['截面高度(mm)', '3000', 'b', 'box', 1],
    ['轴线距左墙皮...', '(300)', 'k', 'box', 0],
    ['水平分布钢筋', <>(2)<Glyph $m={2}><Icon name="rebar" size={14} w={13} /></Glyph>14@150</>, 'b', 'box', 0],
    ['垂直分布钢筋', null, 'b', 'box', 0],
    ['拉筋', <><Glyph $m={1}><Icon name="rebarP" size={14} w={13} /></Glyph>6@600*600</>, 'b', 'box', 0],
    ['材质', '预拌砼', 'b', 'box', 0],
    ['混凝土类型', '(预拌混凝土)', 'b', 'box', 0],
    ['混凝土强度等级', '(C20)', 'b', 'box', 0],
    ['混凝土外加剂', '(无)', 'b', '', 0],
    ['泵送类型', '(混凝土泵)', 'b', '', 0],
    ['泵送高度(m)', '', 'k', '', 0],
    ['内/外墙标志', '(外墙)', 'k', 'on', 0],
    ['类别', '混凝土墙', 'b', 'box', 0],
    ['截面周长(m)', '6.915', 'b', 'box', 1],
    ['截面面积', '', 'b', 'box', 1],
]

const navItems = ['常用类型', '轴网(J)', '', '', '', '柱(Z)', '构造柱(Z)', '砌体柱(Z)', '约束边缘非阴影区(Z)', '',
    '剪力墙(Q)', '人防门框墙(RF)', '砌体墙(Q)', '砌体加筋(Y)', '保温墙(Q)', '暗梁(A)', '墙垛(E)', '幕墙(Q)']

const Gutter = styled.div`
    flex: none;
    width: 6px;
    display: flex;
    align-items: center;
    div{
        width: 6px;
        height: 125px;
        margin-top: 4px;
        background: #50545b;
        display: flex;
        align-items: center;
    }
    div::after{
        content: "";
        margin-left: 1px;
        border: 3px solid transparent;
        border-right: 4px solid #9aa0a8;
        border-left: 0;
    }
`;

const Canvas = styled.svg`
    width: 1134px;
    height: 785px;
    background: #000;
    font-family: "Noto Sans CJK SC", sans-serif;
    font-size: 22px;
`;

function Bubble({ x, y, label }){
    const pts = [...Array(10)].map((_, i) => {
        const a = (i * 36 + 18) * Math.PI / 180
        return `${x + 14.8 * Math.cos(a)},${y + 15 * Math.sin(a)}`
    }).join(' ')
    return (
        <g>
            <polygon points={pts} fill="none" stroke="#0b5a14" strokeWidth="1.3" />
            <text x={x} y={y + 8} fill="#f2f2f2" textAnchor="middle">{label}</text>
        </g>
    )
}

function Viewport(){
    return (
        <Canvas viewBox="594 233 1134 785">
            <g stroke="#0d6317" strokeWidth="1.5">
                <path d="M594 778H1046M594 800H1055M594 822H1100M729 778l17 44M904 778l19 44M1099 822l13 33M1452 821l13 34" />
                <path d="M1088 834 1728 831.500M1091 845 1728 843" />
            </g>
            <path d="M1134 777.500 1728 776.500M1134 800 1728 799M1100 821.500 1728 821M1433 777l19 44" stroke="#b40d12" strokeWidth="1.600" />
            <g fill="none" stroke="#999" strokeWidth="1.400">
                <circle cx="1209" cy="626.500" r="373" />
                <circle cx="1209" cy="254" r="37.500" />
                <circle cx="835.500" cy="626" r="37.500" />
                <circle cx="1582.500" cy="626" r="37.500" />
                <circle cx="1209" cy="999.500" r="37.500" />
            </g>
            <path d="M1080 426h36l17.500 44h-35z" fill="#3d3e3c" />
            <path d="M1080 426l18.500 44-35 351-17.500-44z" fill="#383838" />
            <path d="M1098.500 470H1134V821h-70.500z" fill="#8c8c8c" />
            <Bubble x={608.5} y={779} label="C" />
            <Bubble x={608.5} y={801} label="B" />
            <Bubble x={608.5} y={823} label="A" />
            <Bubble x={1118} y={868.5} label="1" />
            <Bubble x={1470} y={868} label="2" />
            <g fill="#f2f2f2" textAnchor="middle">
                <text x="1281.500" y="846">3000</text>
                <text x="1633.500" y="845.500">3000</text>
                <text transform="translate(649 801) rotate(66)" y="8">6000</text>
                <text transform="translate(821 789) rotate(66)" y="8">3000</text>
                <text transform="translate(830.500 813) rotate(66)" y="8">3000</text>
            </g>
            <path d="M656.500 952V930" stroke="#0000f5" strokeWidth="5" />
            <path d="M656.500 919l6.500 15h-13z" fill="#0000f5" />
            <path d="M660 956h20" stroke="#f50000" strokeWidth="5" />
            <path d="M693 956l-15 6v-12z" fill="#f50000" />
            <circle cx="655" cy="954.500" r="6" fill="#3fdc5a" />
            <path d="M653 951h8v10h-8z" fill="#f0f0f0" />
            <text x="656.500" y="918" fill="#1212e8" textAnchor="middle" fontSize="19">Z</text>
            <text x="701.500" y="963" fill="#f50000" textAnchor="middle" fontSize="19">X</text>
        </Canvas>
    )
}

/* ---------- status bar ---------- */
const Status = styled.div`
    flex: none;
    height: 34px;
    display: flex;
    align-items: flex-end;
    background: #dcddde;
    border-top: 1px solid #c3c5c6;
    color: #4a4a4a;
    overflow: hidden;
`;

const StatusText = styled.div`
    flex: none;
    width: ${props => props.$w}px;
    height: 29px;
    line-height: 28px;
    word-spacing: ${props => props.$ws || 0}px;
`;

const StatusButton = styled.div`
    flex: none;
    width: ${props => props.$w}px;
    height: 30px;
    margin-right: ${props => props.$mr}px;
    padding-bottom: 1px;
    display: flex;
    align-items: center;
    justify-content: center;
    gap: 6px;
    background: ${props => props.$on ? '#fcfdff' : '#cfd0d2'};
    border: 1px solid ${props => props.$on ? '#5c9fe6' : '#b2b4b6'};
    border-bottom: 0;
`;

/* ---------- floating windows ---------- */
const Recorder = styled.div`
    position: absolute;
    left: 1280px;
    top: 940px;
    width: 448px;
    height: 95px;
    background: #f5f6f8;
    box-shadow: 0 2px 6px rgba(0,0,0,0.4);
`;

const RecorderHead = styled.div`
    height: 40px;
    display: flex;
    align-items: center;
    justify-content: space-between;
    padding: 0 10px 0 12px;
    color: #f2f2f2;
    background: #222b37;
    span{
        margin: 0 0 3px -17px;
        letter-spacing: 0.15px;
    }
`;

const RecorderBody = styled.div`
    height: 55px;
    display: flex;
    align-items: center;
    padding-left: 17px;
`;

const Pause = styled.div`
    width: 18px;
    height: 25px;
    display: flex;
    justify-content: space-between;
    &::before, &::after{
        content: "";
        width: 7px;
        border-radius: 3px;
        background: #2270c8;
    }
`;

const Stop = styled.div`
    width: 25px;
    height: 25px;
    margin: 0 14px 0 31px;
    border-radius: 5px;
    background: #d5623b;
`;

const Level = styled.div`
    width: 35px;
    height: 3px;
    margin: 26px 25px 0 21px;
    background: repeating-linear-gradient(90deg, #c96a45 0 5px, transparent 5px 6px);
`;

const RecorderLine = styled.div`
    width: 1px;
    height: 46px;
    background: #e2e4e7;
`;

const PinBox = styled.div`
    display: flex;
    align-items: center;
    width: 51px;
    height: 46px;
    border-right: 1px solid #e2e4e7;
    &::after{
        content: "";
        width: 20px;
        height: 1px;
        margin: 4px 0 0 -14px;
        background: #b3a3ac;
    }
`;

const Gap = styled.div`
    flex: none;
    width: ${props => props.$w}px;
`;

const Ime = styled.div`
    position: absolute;
    left: 1496px;
    top: 1024px;
    width: 232px;
    height: 28px;
    padding: 1px 0 0 28px;
    display: flex;
    align-items: center;
    gap: 12.5px;
    background: #fdfdfe;
    border-top: 1px solid #dcdde0;
    color: #1667d1;
    b{
        width: 18px;
        font-size: 18px;
        line-height: 20px;
    }
`;

const ImeClip = styled.div`
    position: absolute;
    left: 1474px;
    top: 1014px;
    width: 46px;
    height: 38px;
    overflow: hidden;
`;

const ImeLogo = styled.div`
    width: 34px;
    height: 34px;
    margin: 6px 0 0 5px;
    transform: rotate(-12deg);
    border-radius: 5px;
    background: #e8582a;
    color: #fff;
    font: bold 36px/34px "Liberation Sans", sans-serif;
    text-align: center;
`;

const ClickSpot = styled.div`
    position: absolute;
    left: 302px;
    top: 873px;
    width: 49px;
    height: 49px;
    border-radius: 50%;
    background: rgba(255,75,80,0.72);
`;

const Pointer = styled.svg`
    position: absolute;
    left: 325px;
    top: 896px;
`;

const EdgeTip = styled.div`
    position: absolute;
    left: 0;
    top: ${props => props.$t}px;
    width: 6px;
    height: ${props => props.$h}px;
    background: ${props => props.$line ? '#fff' : '#e4e5e5'};
    border: ${props => props.$line ? '1px solid #666' : '0'};
    border-left: 0;
    box-shadow: 2px 2px 6px rgba(0,0,0,0.3);
`;

export default function App(){
    const [tab, setTab] = useState('建模')
    return (
        <>
        <GlobalStyle />
        <Window>
            <TitleBar>
                <QuickIcon $w={29}><Icon name="folder" /></QuickIcon>
                <QuickIcon $w={29}><Icon name="save" size={19} /></QuickIcon>
                <QuickIcon $w={40} $pad={8}><Icon name="undo" /><Arrow /></QuickIcon>
                <QuickIcon $w={43}><Icon name="redo" /><Arrow $c="#aaa" /></QuickIcon>
                <QuickIcon $w={26}><Icon name="sigma" size={17} w={15} /></QuickIcon>
                <QuickIcon $w={28}><Icon name="calc" /></QuickIcon>
                <QuickIcon $w={30}><Icon name="report" /></QuickIcon>
                <QuickIcon $w={30}><Icon name="glasses" size={19} /></QuickIcon>
                <QuickIcon $w={27}><Icon name="brush" size={18} /></QuickIcon>
                <QuickIcon $w={28}><Icon name="mesh" /></QuickIcon>
                <QuickIcon $w={29}><Icon name="addpage" /></QuickIcon>
                <svg width="10" height="10" viewBox="0 0 10 10"><path d="M1 2h7M1.500 5h6.500L4.700 9z" fill="#555" stroke="#555" strokeWidth=".8" /></svg>
                <Title>广联达BIM土建计量平台 GTJ2021 - [工程1]</Title>
                <Minimise />
            </TitleBar>
            <TabRow>
                {['开始', '工程设置', '建模', '视图', '工具', '工程量', '云应用', '协同建模(限免)', 'IGMS'].map(t => (
                    <Tab key={t} $on={t === tab} onClick={() => setTab(t)}>{t}</Tab>
                ))}
                <Ask>答疑解惑，搜这里<Icon name="search" size={14} /></Ask>
                <Account>
                    <Icon name="user" size={19} />
                    <Icon name="chat" size={19} />
                    <Icon name="headset" size={19} />
                </Account>
            </TabRow>
            <Ribbon>
                {ribbon.map(g => (
                    <Group key={g.name} $w={g.w}>
                        <GroupBody $pl={g.pl}>
                            {g.cols.map((col, i) => <ToolColumn key={i} col={col} />)}
                        </GroupBody>
                        <GroupName $shift={g.shift}>{g.name}<Arrow $s={5} /></GroupName>
                    </Group>
                ))}
                <Group $w={149}>
                    <GroupBody $pl={7}>
                        <BigTool $off $w={53}><Icon name="point" size={40} box={40} />点</BigTool>
                        <BigTool $on $w={50}><Icon name="line" size={40} box={40} />直线</BigTool>
                        <Column $w={28} $pl={5}>
                            <Tool><Icon name="arc" /></Tool>
                            <Tool><Icon name="circle" size={19} /></Tool>
                            <Tool><Icon name="rect" /></Tool>
                        </Column>
                    </GroupBody>
                    <GroupName>绘图<Arrow $s={5} /></GroupName>
                </Group>
                <Group $w={203}>
                    <GroupBody $pl={9}>
                        <BigTool $off $w={66}><Icon name="idtable" size={40} box={40} />识别<br />剪力墙表</BigTool>
                        <BigTool $off $w={63}><Icon name="idwall" size={40} box={40} />识别<br />剪力墙</BigTool>
                        <BigTool $off $w={53}><Icon name="check3d" size={40} box={40} />校核<br />墙图元</BigTool>
                    </GroupBody>
                    <GroupName $low $shift={34}>识别剪力墙</GroupName>
                </Group>
                <Group $w={290}>
                    <GroupBody $pl={3}>
                        <BigTool $w={71}><Icon name="smart" size={40} box={40} />智能布置<Arrow /></BigTool>
                        <ToolColumn col={{ w: 98, tools: [['elev', '查改标高'], ['slope', '设置斜墙'], ['arch', '设置拱墙']] }} />
                        <ToolColumn col={{ w: 110, tools: [['through', '墙体拉通'], ['inout', '判断内外墙']] }} />
                    </GroupBody>
                    <GroupName $low $shift={3}>剪力墙二次编辑</GroupName>
                </Group>
            </Ribbon>
            <Options>
                <Combo $w={30} $flush><span /><Arrow /></Combo>
                <Combo $w={123.5}>墙<Arrow /></Combo>
                <Combo $w={124}>剪力墙<Arrow /></Combo>
                <Combo $w={124}>JLQ-1<Arrow /></Combo>
                <OptionText $w={23} $pl={2}><Check /></OptionText>
                <OptionText $w={64}>点加长度</OptionText>
                <OptionText $off $w={36}>长度:</OptionText>
                <Input $w={98}>0</Input>
                <OptionText $off $w={68} $pl={3}>反向长度:</OptionText>
                <Input $w={98}>0</Input>
                <Divider />
                <OptionText $w={79}>左偏心距离:</OptionText>
                <Input $w={98}>300</Input>
                <Divider />
                <Combo $w={72} $flush>不偏移<Arrow /></Combo>
                <OptionText $off $w={23} $pl={1}>X=</OptionText>
                <Input $off $w={76}>0<Spin><Arrow $c="#333" /><Arrow $c="#333" /></Spin></Input>
                <OptionText $off $w={30} $pl={1}>mm</OptionText>
                <OptionText $off $w={21}>Y=</OptionText>
                <Input $off $w={76}>0<Spin><Arrow $c="#333" /><Arrow $c="#333" /></Spin></Input>
                <OptionText $off $w={40} $pl={1}>mm</OptionText>
            </Options>
            <Main>
                <Nav>
                    <PanelTop>×</PanelTop>
                    <NavHead />
                    <NavTools>
                        <ModeButton><Icon name="list" size={18} w={16} /></ModeButton>
                        <ModeButton><Icon name="card" size={19} /></ModeButton>
                    </NavTools>
                    <NavBody>
                        <NavList>
                            {navItems.map((t, i) => (
                                <NavItem key={i} $head={i === 0} $on={i === 10}><span>{t}</span></NavItem>
                            ))}
                        </NavList>
                        <Scroll $h={325} $m="20px 5px 0 0" />
                    </NavBody>
                </Nav>
                <Side>
                    <Panel $h={255}>
                        <PanelTop>×</PanelTop>
                        <PanelTabs>
                            <PanelTab $on>构件列表</PanelTab>
                            <PanelTab>图纸管理</PanelTab>
                        </PanelTabs>
                        <PanelTools>
                            <PanelTool $w={81}><Icon name="newfile" />新建<Arrow /></PanelTool>
                            <PanelTool $w={67}><Icon name="dup" />复制</PanelTool>
                            <PanelTool $w={68}><Icon name="del" />删除</PanelTool>
                            <PanelTool $w={97}><Icon name="layer" />层间复制</PanelTool>
                            <PanelTool $w={83}><Icon name="archive" />存档</PanelTool>
                            <svg width="9" height="8" viewBox="0 0 9 8"><path d="M0 0l4 4-4 4zM5 0l4 4-4 4z" fill="#333" /></svg>
                        </PanelTools>
                        <SearchRow>搜索构件...<Icon name="search" size={14} /></SearchRow>
                        <TreeRoot>剪力墙</TreeRoot>
                        <TreeLeaf>JLQ-1 [外墙]</TreeLeaf>
                    </Panel>
                    <Panel $h={524}>
                        <PanelTop>×</PanelTop>
                        <PanelTabs>
                            <PanelTab $on>属性列表</PanelTab>
                            <PanelTab>图层管理</PanelTab>
                        </PanelTabs>
                        <TableWrap>
                            <Table>
                                <Row>
                                    <Cell $bg="#ededee" />
                                    <Cell $mid $bg="#ededee" $c="#555">属性名称</Cell>
                                    <Cell $mid $bold $bg="#7fb8f6" $c="#fff">属性值</Cell>
                                    <Cell $mid $bg="#ededee" $c="#555">附加</Cell>
                                </Row>
                                {rows.map(([name, value, color, box, dim], i) => (
                                    <Row key={name}>
                                        <Cell $mid $bold={i === 6} $c={i === 6 ? '#fff' : '#444'} $bg={i === 6 ? '#7fb8f6' : '#ededee'}>{i + 1}</Cell>
                                        <Cell $c={color === 'b' ? '#3363d8' : '#222'}>{name}</Cell>
                                        <Cell $c={dim ? '#a0a0a0' : '#222'} $bg={dim ? '#e9eaea' : '#fefefe'}>
                                            {value === null ? <Editor><span>(2)C12@200</span><b>···</b></Editor> : value}
                                        </Cell>
                                        <Cell $mid>
                                            {box === 'on' && <Check $on><svg width="14" height="14" viewBox="0 0 14 14"><path d="m3 7 3 3 6-6" fill="none" stroke="#fff" strokeWidth="2" /></svg></Check>}
                                            {box === 'box' && <Check />}
                                        </Cell>
                                    </Row>
                                ))}
                            </Table>
                            <Scroll $h={315} $m="18px 0 0 5px" />
                        </TableWrap>
                    </Panel>
                </Side>
                <Gutter><div /></Gutter>
                <Viewport />
            </Main>
            <Status>
                <StatusText $w={235}>= -4926 Z = 1307</StatusText>
                <StatusText $w={51}>层高：</StatusText>
                <StatusText $w={53}>3</StatusText>
                <StatusText $w={51}>标高：</StatusText>
                <StatusText $w={115}>-0.05~2.95</StatusText>
                <StatusText $w={129}>0</StatusText>
                <StatusText $w={129}>隐藏：0</StatusText>
                <StatusButton $w={31} $mr={4}><Icon name="ortho" size={18} /></StatusButton>
                <StatusButton $w={45} $mr={7} $on><Icon name="snapbox" /><Arrow /></StatusButton>
                <StatusButton $w={31} $mr={8}><Icon name="cross" /></StatusButton>
                <StatusButton $w={45} $mr={4}><Icon name="angle" /><Arrow /></StatusButton>
                <StatusButton $w={45} $mr={4}><Icon name="plusbar" /><Arrow /></StatusButton>
                <StatusButton $w={91} $mr={4}>跨图层选择</StatusButton>
                <StatusButton $w={77} $mr={6}>折线选择</StatusButton>
                <StatusText $w={400} $ws={3}>格式：排数 + 级别 + 直径 +@+ 间距,不同直径</StatusText>
            </Status>
            <EdgeTip $t={350} $h={28} />
            <EdgeTip $t={382} $h={25} $line />
            <ClickSpot />
            <Pointer width="14" height="21" viewBox="0 0 14 21">
                <path d="M1 1v15.500l3.700-3.300 2.500 6 2.500-1.100-2.500-5.800H12z" fill="#fff" stroke="#222" />
            </Pointer>
            <Recorder>
                <RecorderHead>
                    <Icon name="cam" size={25} w={28} />
                    <span>录制中... 00:03:13</span>
                    <svg width="16" height="15" viewBox="0 0 16 15"><path d="M1 1l14 13M15 1 1 14" stroke="#fff" strokeWidth="2" /></svg>
                </RecorderHead>
                <RecorderBody>
                    <Pause />
                    <Stop />
                    <RecorderLine />
                    <Level />
                    <PinBox><Icon name="pin" size={40} w={30} /></PinBox>
                    <Gap $w={10} />
                    <Icon name="webcam" size={32} w={31} />
                    <Gap $w={16} />
                    <Arrow $s={3} $c="#000" />
                    <Gap $w={20} />
                    <Icon name="pencil" size={31} />
                </RecorderBody>
            </Recorder>
            <Ime>
                <b>中</b>
                <b>°,</b>
                <Icon name="face" size={19} />
                <Icon name="mic" size={20} w={18} />
                <Icon name="keyboard" size={18} w={20} />
                <Icon name="person" size={19} w={18} />
                <Icon name="shirt" size={19} />
            </Ime>
            <ImeClip><ImeLogo>S</ImeLogo></ImeClip>
        </Window>
        </>
    )
}
